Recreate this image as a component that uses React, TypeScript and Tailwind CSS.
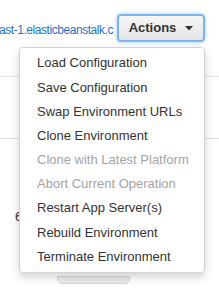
import React from 'react';

const items = [
  { label: 'Load Configuration' },
  { label: 'Save Configuration' },
  { label: 'Swap Environment URLs' },
  { label: 'Clone Environment' },
  { label: 'Clone with Latest Platform', disabled: true },
  { label: 'Abort Current Operation', disabled: true },
  { label: 'Restart App Server(s)' },
  { label: 'Rebuild Environment' },
  { label: 'Terminate Environment' },
];

export default function App() {
  return (
    <div className="relative w-[219px] h-[300px] bg-white overflow-hidden font-['Liberation_Sans',Arial,sans-serif]">
      {/* header row */}
      <div className="flex items-center pt-[14px]">
        <div className="flex-1 flex justify-end overflow-hidden pr-[4px] pt-[3px]">
          <span className="whitespace-nowrap text-[12px] tracking-[-0.45px] text-[#1f6fc9]">
            ast-1.elasticbeanstalk.c
          </span>
        </div>
        <button className="w-[88px] h-[28px] mr-[14px] flex items-center justify-center gap-[9px] rounded-[4px] border-2 border-[#7db3ee] bg-gradient-to-b from-[#f7f7f7] to-[#e4e4e4] shadow-[0_0_4px_rgba(102,175,233,0.6)] text-[13px] font-bold text-[#333]">
          Actions
          <svg width="8" height="5" viewBox="0 0 8 5">
            <path d="M0 0h8L4 4.5z" fill="#333" />
          </svg>
        </button>
      </div>

      {/* content behind the menu */}
      <div className="mt-[34px] h-[63px] border-y border-[#e2e2e2]" />
      <div className="mt-[68px] pl-[15px] text-[13px] text-[#333]">6</div>
      <div className="mt-[49px] ml-[57px] w-[73px] h-[8px] rounded-b-[5px] bg-[#ebebeb] border border-[#d6d6d6]" />

      {/* dropdown */}
      <div className="absolute left-[19px] top-[47px] w-[186px] rounded-[4px] border border-[#d4d4d4] bg-white py-[3px] shadow-[0_4px_10px_rgba(0,0,0,0.18)]">
        {items.map((it) => (
          <div
            key={it.label}
            className={`h-[24.2px] flex items-center pl-[17px] text-[13px] whitespace-nowrap ${
              it.disabled ? 'text-[#a3a3a3]' : 'text-[#333]'
            }`}
          >
            {it.label}
          </div>
        ))}
      </div>
    </div>
  );
}
